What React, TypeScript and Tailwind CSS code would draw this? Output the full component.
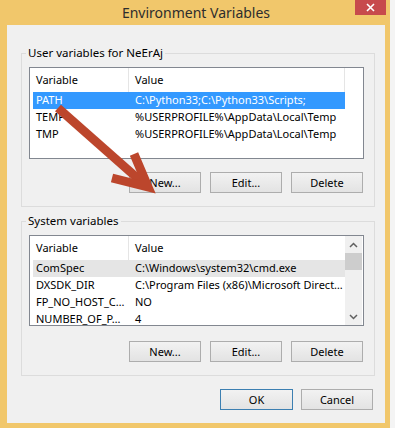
import React from 'react'

const font = { fontFamily: '"Noto Sans", "Open Sans", sans-serif' }

type Row = { name: string; value: string }

const userVars: Row[] = [
  { name: 'PATH', value: 'C:\\Python33;C:\\Python33\\Scripts;' },
  { name: 'TEMP', value: '%USERPROFILE%\\AppData\\Local\\Temp' },
  { name: 'TMP', value: '%USERPROFILE%\\AppData\\Local\\Temp' },
]

const systemVars: Row[] = [
  { name: 'ComSpec', value: 'C:\\Windows\\system32\\cmd.exe' },
  { name: 'DXSDK_DIR', value: 'C:\\Program Files (x86)\\Microsoft Direct…' },
  { name: 'FP_NO_HOST_C…', value: 'NO' },
  { name: 'NUMBER_OF_P…', value: '4' },
]

function Button({ label, primary = false, w = 'w-[72px]' }: { label: string; primary?: boolean; w?: string }) {
  return (
    <button
      className={`${w} h-[21px] text-[11px] text-black leading-none bg-gradient-to-b from-[#f2f2f2] to-[#e3e3e3] border ${
        primary ? 'border-[#3c7fb1]' : 'border-[#adadad]'
      }`}
    >
      {label}
    </button>
  )
}

function ListHeader({ last }: { last?: boolean }) {
  return (
    <div className="flex h-[24px] items-center bg-white">
      <div className="w-[99px] h-full flex items-center pl-[6px] border-r border-[#e5e5e5]">Variable</div>
      <div className={`w-[216px] h-full flex items-center pl-[6px] ${last ? 'border-r border-[#e5e5e5]' : ''}`}>Value</div>
    </div>
  )
}

function ListRows({ rows, selected, active }: { rows: Row[]; selected: number; active: boolean }) {
  return (
    <div className="pl-[3px]">
      {rows.map((r, i) => {
        const sel = i === selected
        const cls = sel ? (active ? 'bg-[#3399ff] text-white' : 'bg-[#e5e5e5]') : ''
        return (
          <div key={i} className={`flex h-[17px] items-center w-[312px] ${cls}`}>
            <div className="w-[96px] pl-[3px] whitespace-nowrap overflow-hidden">{r.name}</div>
            <div className="flex-1 pl-[6px] whitespace-nowrap overflow-hidden">{r.value}</div>
          </div>
        )
      })}
    </div>
  )
}

function Chevron({ up }: { up?: boolean }) {
  return (
    <svg width="9" height="6" viewBox="0 0 9 6">
      <path d={up ? 'M1 5 L4.5 1.5 L8 5' : 'M1 1 L4.5 4.5 L8 1'} fill="none" stroke="#606060" strokeWidth="1.5" />
    </svg>
  )
}

export default function App() {
  return (
    <div className="relative w-[395px] h-[428px] flex bg-[#f2f2f2] overflow-hidden text-[11px] text-black" style={font}>
      {/* window */}
      <div className="w-[390px] h-[428px] bg-[#f1c76b] flex flex-col pl-[7px] pr-[5px] pb-[5px]">
        <div className="relative h-[25px] flex items-center justify-center">
          <span className="text-[14px] text-[#2d2d2d] -mt-[1px]">Environment Variables</span>
          <div className="absolute right-[-1px] top-0 w-[31px] h-[15px] bg-[#c74a4c] flex items-center justify-center">
            <svg width="9" height="9" viewBox="0 0 9 9">
              <path d="M1 1 L8 8 M8 1 L1 8" stroke="white" strokeWidth="1.6" />
            </svg>
          </div>
        </div>

        <div className="flex-1 bg-[#f0f0f0] flex flex-col">
          {/* user vars */}
          <fieldset className="ml-[14px] mt-[20px] w-[354px] border border-[#dcdcdc] pb-[13px]">
            <legend className="ml-[4px] px-[2px] leading-[16px] text-[11.5px]">User variables for NeErAj</legend>
            <div className="ml-[7px] mt-[6px] w-[335px] h-[92px] border border-[#828790] bg-white">
              <ListHeader last />
              <ListRows rows={userVars} selected={0} active />
            </div>
            <div className="flex justify-end gap-[9px] pr-[11px] mt-[13px]">
              <Button label="New..." />
              <Button label="Edit..." />
              <Button label="Delete" />
            </div>
          </fieldset>

          {/* system vars */}
          <fieldset className="ml-[14px] mt-[6px] w-[354px] border border-[#dcdcdc] pb-[13px]">
            <legend className="ml-[4px] px-[2px] leading-[16px] text-[11.5px]">System variables</legend>
            <div className="ml-[7px] mt-[6px] w-[335px] h-[91px] border border-[#828790] bg-white flex overflow-hidden">
              <div className="flex-1">
                <ListHeader />
                <ListRows rows={systemVars} selected={0} active={false} />
              </div>
              <div className="w-[17px] mr-px bg-[#f0f0f0] flex flex-col">
                <div className="h-[17px] flex items-center justify-center">
                  <Chevron up />
                </div>
                <div className="h-[17px] bg-[#cdcdcd]" />
                <div className="flex-1" />
                <div className="h-[17px] flex items-center justify-center">
                  <Chevron />
                </div>
              </div>
            </div>
            <div className="flex justify-end gap-[9px] pr-[11px] mt-[15px]">
              <Button label="New..." />
              <Button label="Edit..." />
              <Button label="Delete" />
            </div>
          </fieldset>

          <div className="flex justify-end gap-[8px] pr-[12px] mt-[13px]">
            <Button label="OK" primary w="w-[73px]" />
            <Button label="Cancel" />
          </div>
        </div>
      </div>
      <div className="flex-1 bg-[#f4f4f4]" />

      {/* annotation arrow drawn over the dialog */}
      <svg className="absolute inset-0 pointer-events-none" width="395" height="428" viewBox="0 0 395 428">
        <path d="M58 108 L144 184" stroke="#bc462c" strokeWidth="9" fill="none" />
        <path d="M134 154 L148 187 L112 178" stroke="#bc462c" strokeWidth="9" fill="none" strokeLinejoin="miter" />
      </svg>
    </div>
  )
}
